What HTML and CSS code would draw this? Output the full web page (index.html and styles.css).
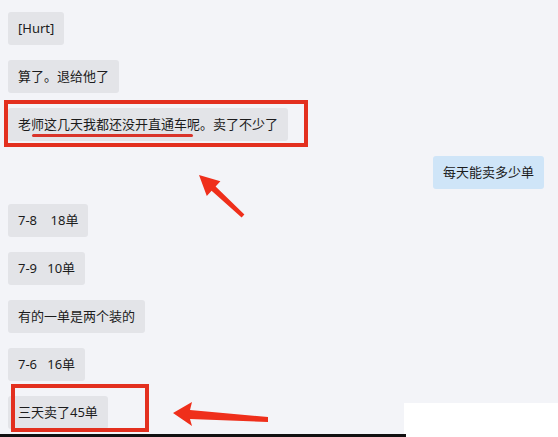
FILE: index.html
```html
<!DOCTYPE html>
<html lang="zh">
<head>
<meta charset="utf-8">
<link rel="stylesheet" href="styles.css">
</head>
<body>
<div class="chat">
  <div class="msg">[Hurt]</div>
  <div class="msg">算了。退给他了</div>
  <div class="msg">老师这几天我都还没开直通车呢。卖了不少了</div>
  <div class="msg mine">每天能卖多少单</div>
  <div class="msg">7-8&nbsp;&nbsp;&nbsp;&nbsp;18单</div>
  <div class="msg">7-9&nbsp;&nbsp;&nbsp;10单</div>
  <div class="msg">有的一单是两个装的</div>
  <div class="msg">7-6&nbsp;&nbsp;&nbsp;16单</div>
  <div class="msg">三天卖了45单</div>
</div>
<div class="mark box1"></div>
<div class="underline"></div>
<div class="mark box2"></div>
<svg class="arrows" width="558" height="437" viewBox="0 0 558 437">
  <polygon fill="#ef2f1b" points="199,175 220.4,181.3 215.6,186.4 244.4,214.5 241.6,217.5 211.6,190.8 206.8,195.9"/>
  <polygon fill="#ef2f1b" points="173,413 192,402 190,410 268,417 268,422 190,419 192,426"/>
</svg>
<div class="blank"></div>
<div class="bottomline"></div>
</body>
</html>
```

FILE: styles.css
```css
html, body {
  margin: 0;
  padding: 0;
  width: 558px;
  height: 437px;
  overflow: hidden;
  background: #f3f4f8;
  position: relative;
}
.chat {
  display: flex;
  flex-direction: column;
  align-items: flex-start;
  gap: 15px;
  padding: 12px 14px 0 8px;
  font-family: "Noto Sans", "Noto Sans CJK SC", sans-serif;
  font-size: 13px;
  color: #1c1c1c;
}
.msg {
  background: #e3e4e8;
  border-radius: 3px;
  padding: 8px 10px;
  line-height: 17px;
  white-space: nowrap;
}
.msg.mine {
  align-self: flex-end;
  background: #cfe5f8;
}
.mark {
  position: absolute;
  border: 4px solid #e3301f;
  box-sizing: border-box;
}
.box1 {
  left: 4px;
  top: 100px;
  width: 304px;
  height: 47px;
}
.box2 {
  left: 11px;
  top: 384px;
  width: 138px;
  height: 48px;
}
.underline {
  position: absolute;
  left: 32px;
  top: 134px;
  width: 161px;
  height: 3px;
  border-radius: 2px;
  background: #d9342a;
}
.arrows {
  position: absolute;
  left: 0;
  top: 0;
}
.blank {
  position: absolute;
  left: 404px;
  top: 403px;
  width: 154px;
  height: 34px;
  background: #ffffff;
}
.bottomline {
  position: absolute;
  left: 0;
  top: 434px;
  width: 406px;
  height: 3px;
  background: #111111;
}
```
